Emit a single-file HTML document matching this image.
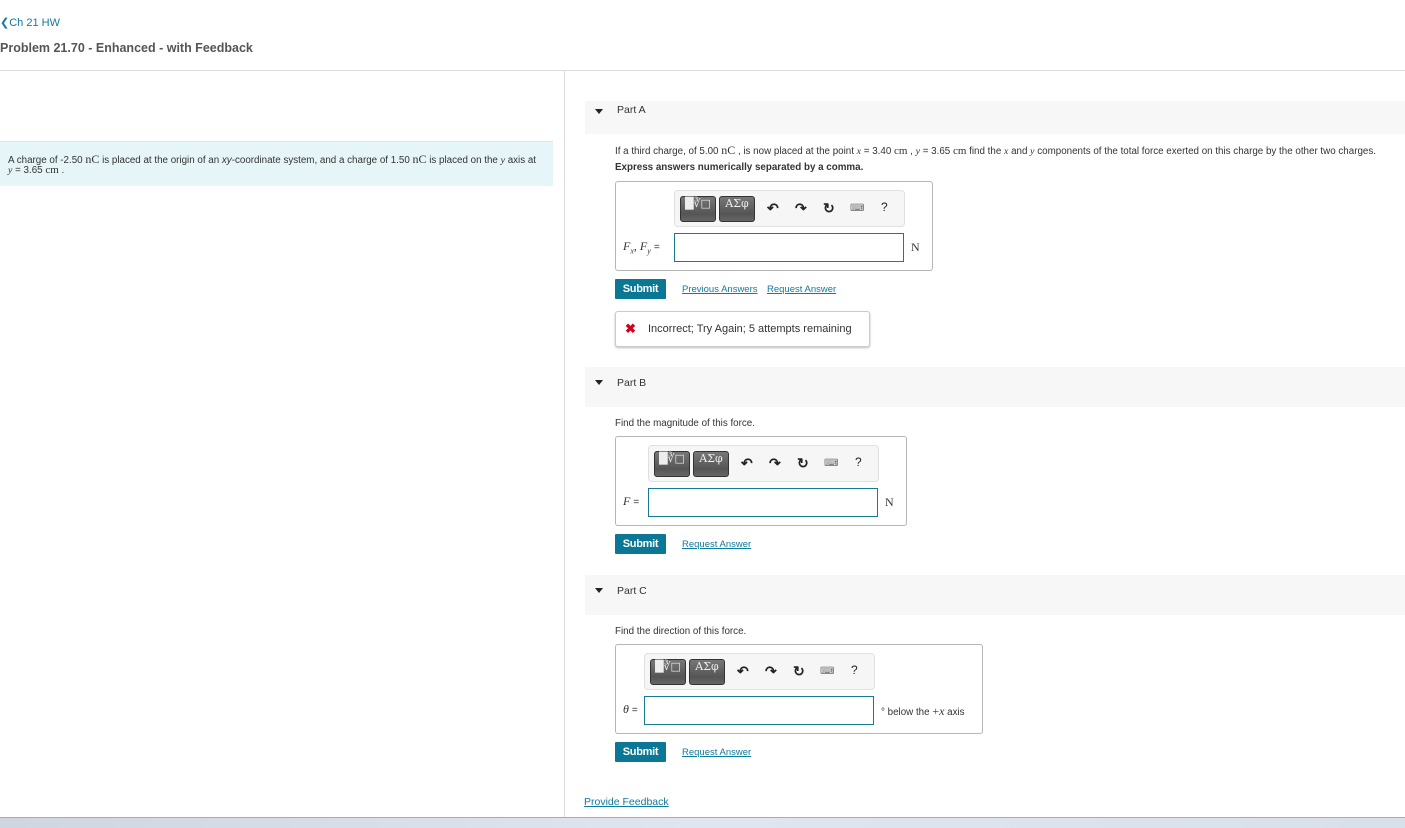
<!DOCTYPE html>
<html><head><meta charset="utf-8"><style>
body{margin:0;width:1405px;height:827px;position:relative;overflow:hidden;background:#fff;font-family:"Liberation Sans",Arial,sans-serif;color:#333}
.a{position:absolute}
.m{font-family:"Liberation Serif",serif}
.hdr{position:absolute;left:585px;right:0;height:33px;background:#f7f7f7}
.hdr .tri{position:absolute;left:10px;top:8px;width:0;height:0;border-left:4px solid transparent;border-right:4px solid transparent;border-top:5px solid #222}
.hdr span{position:absolute;left:32px;top:3px;font-size:10.5px;color:#333}
.box{position:absolute;border:1px solid #b5b5b5;border-radius:3px;background:#fff}
.tb{position:absolute;width:229px;height:35px;border:1px solid #e0e0e0;border-radius:4px;background:#f6f6f6}
.btn{position:absolute;top:5px;width:34px;height:24px;border-radius:3px;background:linear-gradient(#777,#555 70%,#666);border:1px solid #333;color:#eee;font-size:11px;font-family:"DejaVu Serif",serif;text-align:center;line-height:14px}
.ic{position:absolute;top:9px;font-size:14px;font-weight:bold;color:#222}
.inp{position:absolute;height:27px;border:1px solid #1a7a96;background:#fff}
.sub{position:absolute;left:615px;width:51px;height:20px;background:#0a7895;color:#fff;font-size:11px;font-weight:bold;text-align:center;line-height:20px;border-radius:1px;letter-spacing:-0.3px}
.lk{position:absolute;color:#127a9c;text-decoration:underline;font-size:9.5px}
.t{position:absolute;font-size:9.8px;color:#333;white-space:nowrap}
</style></head><body>
<div class="a" style="left:0;top:16px;font-size:11px;color:#127a9c">&#10094;Ch 21 HW</div>
<div class="a" style="left:0;top:41px;font-size:12.5px;font-weight:bold;color:#555">Problem 21.70 - Enhanced - with Feedback</div>
<div class="a" style="left:0;top:70px;width:1405px;height:1px;background:#ddd"></div>
<div class="a" style="left:564px;top:70px;width:1px;height:747px;background:#ddd"></div>
<div class="a" style="left:0;top:141px;width:553px;height:44px;background:#e6f5f7;border-top:1px solid #d6e6ea"></div>
<div class="t" style="left:8px;top:152px">A charge of -2.50 <span class="m" style="font-size:12px">nC</span> is placed at the origin of an <i>xy</i>-coordinate system, and a charge of 1.50 <span class="m" style="font-size:12px">nC</span> is placed on the <i class="m">y</i> axis at</div>
<div class="t" style="left:8px;top:164px"><i class="m">y</i> = 3.65 <span class="m" style="font-size:11px">cm</span> .</div>

<div class="hdr" style="top:101px"><div class="tri"></div><span>Part A</span></div>
<div class="t" style="left:615px;top:143px">If a third charge, of 5.00 <span class="m" style="font-size:12px">nC</span> , is now placed at the point <i class="m">x</i> = 3.40 <span class="m" style="font-size:11px">cm</span> , <i class="m">y</i> = 3.65 <span class="m" style="font-size:11px">cm</span> find the <i class="m">x</i> and <i class="m">y</i> components of the total force exerted on this charge by the other two charges.</div>
<div class="t" style="left:615px;top:162px;font-weight:bold">Express answers numerically separated by a comma.</div>
<div class="box" style="left:615px;top:181px;width:316px;height:88px"></div>
<div class="tb" style="left:674px;top:190px"><div class="btn" style="left:5px">&#9608;&#8731;&#9633;</div><div class="btn" style="left:44px">ΑΣφ</div><div class="ic" style="left:92px">&#8630;</div><div class="ic" style="left:120px">&#8631;</div><div class="ic" style="left:148px">&#8635;</div><div class="ic" style="left:175px;top:12px;font-size:10px;font-weight:normal;color:#666">&#9000;</div><div class="ic" style="left:206px;font-size:12px;font-weight:normal">?</div></div>
<div class="a m" style="left:623px;top:239px;font-size:12px;font-style:italic">F<sub style="font-size:8px">x</sub>, F<sub style="font-size:8px">y</sub> <span style="font-style:normal;font-family:'Liberation Sans';font-size:10px">=</span></div>
<div class="inp" style="left:674px;top:233px;width:228px"></div>
<div class="a m" style="left:911px;top:240px;font-size:12px">N</div>
<div class="sub" style="top:279px">Submit</div>
<div class="lk" style="left:682px;top:284px">Previous Answers</div>
<div class="lk" style="left:767px;top:284px">Request Answer</div>
<div class="box" style="left:615px;top:311px;width:253px;height:34px;border-color:#ccc;box-shadow:0 1px 2px #bbb"><span style="position:absolute;left:9px;top:9px;color:#d0021b;font-weight:bold;font-size:13px">&#10006;</span><span style="position:absolute;left:32px;top:11px;font-size:11px;color:#333">Incorrect; Try Again; 5 attempts remaining</span></div>

<div class="hdr" style="top:367px;height:40px"><div class="tri" style="top:13px"></div><span style="top:10px">Part B</span></div>
<div class="t" style="left:615px;top:418px">Find the magnitude of this force.</div>
<div class="box" style="left:615px;top:436px;width:290px;height:88px"></div>
<div class="tb" style="left:648px;top:445px"><div class="btn" style="left:5px">&#9608;&#8731;&#9633;</div><div class="btn" style="left:44px">ΑΣφ</div><div class="ic" style="left:92px">&#8630;</div><div class="ic" style="left:120px">&#8631;</div><div class="ic" style="left:148px">&#8635;</div><div class="ic" style="left:175px;top:12px;font-size:10px;font-weight:normal;color:#666">&#9000;</div><div class="ic" style="left:206px;font-size:12px;font-weight:normal">?</div></div>
<div class="a m" style="left:623px;top:494px;font-size:12px;font-style:italic">F <span style="font-style:normal;font-family:'Liberation Sans';font-size:10px">=</span></div>
<div class="inp" style="left:648px;top:488px;width:228px"></div>
<div class="a m" style="left:885px;top:495px;font-size:12px">N</div>
<div class="sub" style="top:534px">Submit</div>
<div class="lk" style="left:682px;top:539px">Request Answer</div>

<div class="hdr" style="top:575px;height:40px"><div class="tri" style="top:13px"></div><span style="top:10px">Part C</span></div>
<div class="t" style="left:615px;top:626px">Find the direction of this force.</div>
<div class="box" style="left:615px;top:644px;width:366px;height:88px"></div>
<div class="tb" style="left:644px;top:653px"><div class="btn" style="left:5px">&#9608;&#8731;&#9633;</div><div class="btn" style="left:44px">ΑΣφ</div><div class="ic" style="left:92px">&#8630;</div><div class="ic" style="left:120px">&#8631;</div><div class="ic" style="left:148px">&#8635;</div><div class="ic" style="left:175px;top:12px;font-size:10px;font-weight:normal;color:#666">&#9000;</div><div class="ic" style="left:206px;font-size:12px;font-weight:normal">?</div></div>
<div class="a m" style="left:623px;top:702px;font-size:12px;font-style:italic">θ <span style="font-style:normal;font-family:'Liberation Sans';font-size:10px">=</span></div>
<div class="inp" style="left:644px;top:696px;width:228px"></div>
<div class="t" style="left:881px;top:704px">° below the <span class="m" style="font-size:12px">+<i>x</i></span> axis</div>
<div class="sub" style="top:742px">Submit</div>
<div class="lk" style="left:682px;top:747px">Request Answer</div>
<div class="lk" style="left:584px;top:796px;font-size:10.5px">Provide Feedback</div>
<div class="a" style="left:0;top:817px;width:1405px;height:10px;background:linear-gradient(90deg,#cfd6e0,#e0e6f0,#d8e0ea);border-top:1px solid #aaa"></div>
</body></html>
